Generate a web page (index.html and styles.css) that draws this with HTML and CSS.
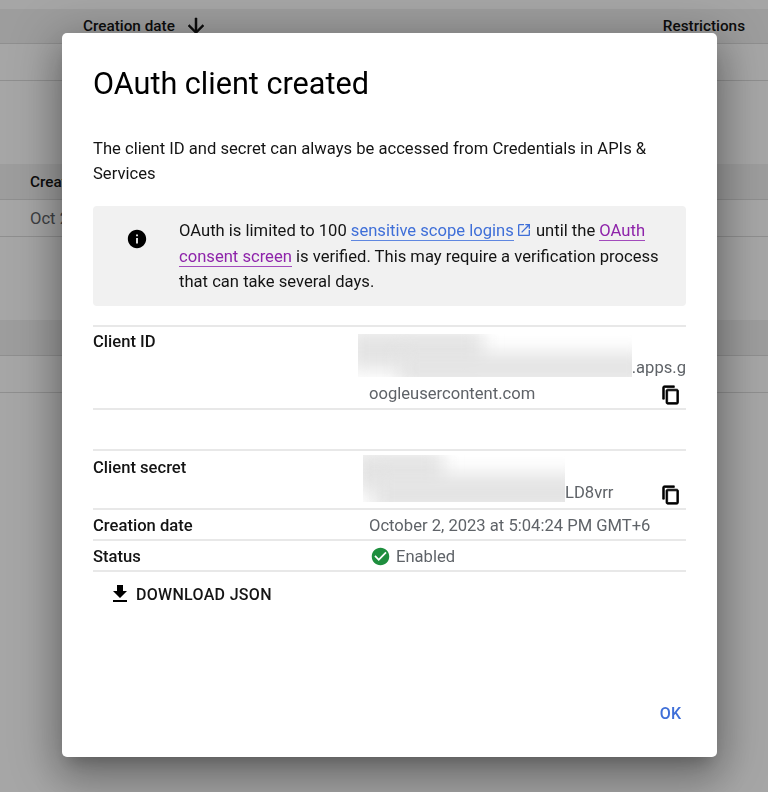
FILE: index.html
```html
<!DOCTYPE html>
<html lang="en">
<head>
    <meta charset="UTF-8">
    <meta name="viewport" content="width=device-width, initial-scale=1.0">
    <title>OAuth client created</title>
    <link rel="stylesheet" href="styles.css">
</head>
<body>
    <!-- Page behind the dialog -->
    <div class="page">
        <div class="table-head first">
            <span class="head-date">Creation date
                <svg class="sort-arrow" viewBox="0 0 24 24" width="24" height="24"><path d="M20 12l-1.41-1.41L13 16.17V4h-2v12.17l-5.58-5.59L4 12l8 8 8-8z"/></svg>
            </span>
            <span>Restrictions</span>
        </div>
        <div class="table-row"></div>
        <div class="table-head second"><span class="head-short">Creation date</span></div>
        <div class="table-row short"><span class="cell-short">Oct 2, 2023</span></div>
        <div class="table-head third"></div>
        <div class="table-row"></div>
    </div>
    <div class="backdrop"></div>

    <div class="dialog">
        <h1 class="dialog-title">OAuth client created</h1>
        <p class="dialog-intro">The client ID and secret can always be accessed from Credentials in APIs &amp; Services</p>

        <div class="notice">
            <svg class="notice-icon" viewBox="0 0 24 24" width="22" height="22"><path d="M12 2C6.48 2 2 6.48 2 12s4.48 10 10 10 10-4.48 10-10S17.52 2 12 2zm1 15h-2v-6h2v6zm0-8h-2V7h2v2z"/></svg>
            <p class="notice-text">OAuth is limited to 100 <a class="link" href="#">sensitive scope logins</a><svg class="ext-icon" viewBox="0 0 24 24" width="16" height="16"><path d="M19 19H5V5h7V3H5c-1.11 0-2 .9-2 2v14c0 1.1.89 2 2 2h14c1.1 0 2-.9 2-2v-7h-2v7zM14 3v2h3.59l-9.83 9.83 1.41 1.41L19 6.41V10h2V3h-7z"/></svg> until the <a class="link visited" href="#">OAuth consent screen</a> is verified. This may require a verification process that can take several days.</p>
        </div>

        <div class="row row-id">
            <div class="row-label">Client ID</div>
            <div class="row-value">
                <div class="secret-line">
                    <div class="redact redact-id"><i></i><i></i></div>
                    <span>.apps.g</span>
                </div>
                <div class="copy-line">
                    <span>oogleusercontent.com</span>
                    <svg class="copy-icon" viewBox="0 0 24 24" width="20" height="20"><path d="M16 1H4c-1.1 0-2 .9-2 2v14h2V3h12V1zm3 4H8c-1.1 0-2 .9-2 2v14c0 1.1.9 2 2 2h11c1.1 0 2-.9 2-2V7c0-1.1-.9-2-2-2zm0 16H8V7h11v14z"/></svg>
                </div>
            </div>
        </div>

        <div class="row row-secret">
            <div class="row-label">Client secret</div>
            <div class="row-value">
                <div class="copy-line">
                    <div class="secret-line">
                        <div class="redact redact-secret"><i></i><i></i></div>
                        <span>LD8vrr</span>
                    </div>
                    <svg class="copy-icon" viewBox="0 0 24 24" width="20" height="20"><path d="M16 1H4c-1.1 0-2 .9-2 2v14h2V3h12V1zm3 4H8c-1.1 0-2 .9-2 2v14c0 1.1.9 2 2 2h11c1.1 0 2-.9 2-2V7c0-1.1-.9-2-2-2zm0 16H8V7h11v14z"/></svg>
                </div>
            </div>
        </div>

        <div class="row row-small">
            <div class="row-label">Creation date</div>
            <div class="row-value">October 2, 2023 at 5:04:24 PM GMT+6</div>
        </div>
        <div class="row row-small row-last">
            <div class="row-label">Status</div>
            <div class="row-value status">
                <svg class="status-icon" viewBox="0 0 24 24" width="21" height="21"><path d="M12 2C6.48 2 2 6.48 2 12s4.48 10 10 10 10-4.48 10-10S17.52 2 12 2zm-2 15l-5-5 1.41-1.41L10 14.17l7.59-7.59L19 8l-9 9z"/></svg>
                Enabled
            </div>
        </div>

        <button class="download-btn" type="button">
            <svg viewBox="0 0 24 24" width="24" height="24"><path d="M19 9h-4V3H9v6H5l7 7 7-7zM5 18v2h14v-2H5z"/></svg>
            DOWNLOAD JSON
        </button>

        <div class="dialog-actions">
            <button class="ok-btn" type="button">OK</button>
        </div>
    </div>
</body>
</html>
```

FILE: styles.css
```css
html, body {
    margin: 0;
    height: 100%;
}
body {
    font-family: Roboto, "Liberation Sans", sans-serif;
    color: #141414;
    background: #fff;
    overflow: hidden;
}

/* page behind */
.page {
    padding-top: 9px;
}
.table-head {
    display: flex;
    align-items: center;
    height: 34px;
    background: #f2f2f2;
    border-bottom: 1px solid #dcdcdc;
    font-size: 15.3px;
    font-weight: 500;
}
.table-head.first {
    justify-content: space-between;
    padding: 0 23px 0 83px;
}
.table-head.second {
    margin-top: 83px;
    padding-left: 30px;
    height: 35px;
}
.table-head.third {
    margin-top: 83px;
    height: 35px;
}
.head-date {
    display: flex;
    align-items: center;
    gap: 9px;
}
.sort-arrow {
    fill: #141414;
    stroke: #141414;
    stroke-width: 0.5;
}
.table-row {
    display: flex;
    align-items: center;
    height: 36px;
    border-bottom: 1px solid #dcdcdc;
}
.cell-short {
    padding-left: 30px;
    color: #5f6368;
    font-size: 16.6px;
}
.backdrop {
    position: fixed;
    inset: 0;
    background: rgba(0, 0, 0, 0.35);
}

/* dialog */
.dialog {
    position: absolute;
    left: 62px;
    top: 33px;
    width: 655px;
    height: 724px;
    box-sizing: border-box;
    padding: 32px 31px 0 31px;
    display: flex;
    flex-direction: column;
    background: #fff;
    border-radius: 5px;
    box-shadow: 0 11px 15px -7px rgba(0, 0, 0, 0.2), 0 24px 38px 3px rgba(0, 0, 0, 0.14), 0 9px 46px 8px rgba(0, 0, 0, 0.26);
}
.dialog-title {
    margin: 0;
    font-size: 30.6px;
    font-weight: 400;
    line-height: 38px;
    color: #000;
}
.dialog-intro {
    margin: 33px 0 0;
    font-size: 16.6px;
    line-height: 25px;
}
.notice {
    display: flex;
    margin-top: 20px;
    height: 100px;
    box-sizing: border-box;
    padding: 12px 20px 0 33px;
    background: #f1f1f1;
    border-radius: 4px;
}
.notice-icon {
    flex: none;
    margin-top: 10px;
    margin-right: 31px;
    fill: #000;
}
.notice-text {
    margin: 0;
    font-size: 16.6px;
    line-height: 25.6px;
}
.link {
    color: #3f6fd8;
    text-decoration: none;
    border-bottom: 1px solid #5f87e0;
}
.link.visited {
    color: #8e24aa;
    border-bottom-color: #a24bbc;
}
.ext-icon {
    fill: #3f6fd8;
    margin-left: 2px;
    vertical-align: -2px;
}

.row {
    display: flex;
    border-top: 2px solid #e8e8e8;
    font-size: 16.6px;
}
.row-label {
    flex: none;
    width: 276px;
    font-weight: 500;
    line-height: 26px;
}
.row-value {
    flex: 1;
    min-width: 0;
    color: #5f6368;
    line-height: 26px;
}
.row-id {
    margin-top: 19px;
    height: 79px;
    padding-top: 2px;
    border-bottom: 2px solid #e8e8e8;
}
.row-secret {
    margin-top: 39px;
    height: 53px;
    padding-top: 4px;
}
.row-small {
    height: 26px;
    padding-top: 3px;
}
.row-last {
    border-bottom: 2px solid #e8e8e8;
}
.secret-line {
    display: flex;
    align-items: flex-end;
    margin-left: -11px;
}
.secret-line span {
    margin-bottom: -4px;
}
.redact {
    position: relative;
    overflow: hidden;
    background: #fff;
}
.redact i {
    position: absolute;
    background: #e4e4e4;
    filter: blur(9px);
}
.redact-id {
    width: 274px;
    height: 43px;
    margin-top: 5px;
}
.redact-id i:first-child {
    left: -10px;
    top: -4px;
    width: 135px;
    height: 40px;
}
.redact-id i:last-child {
    left: 40px;
    top: 18px;
    width: 250px;
    height: 32px;
}
.redact-secret {
    width: 202px;
    height: 47px;
    margin-left: 5px;
}
.redact-secret i:first-child {
    left: -10px;
    top: -4px;
    width: 90px;
    height: 40px;
}
.redact-secret i:last-child {
    left: 10px;
    top: 18px;
    width: 210px;
    height: 40px;
}
.copy-line {
    display: flex;
    justify-content: space-between;
    align-items: center;
    margin-top: 4px;
}
.copy-icon {
    flex: none;
    fill: #000;
    stroke: #000;
    stroke-width: 0.9;
    margin-right: 5px;
    margin-top: 2px;
}
.row-secret .copy-line {
    align-items: flex-end;
    margin-top: 0;
}
.row-secret .copy-icon {
    margin-top: 0;
    margin-bottom: -3px;
}
.status {
    display: flex;
    align-items: center;
    gap: 5px;
    margin-top: -1px;
}
.status-icon {
    fill: #1e8e3e;
    margin-left: 1px;
}
.download-btn {
    display: flex;
    align-items: center;
    gap: 4px;
    align-self: flex-start;
    margin: 9px 0 0 15px;
    padding: 0;
    height: 26px;
    border: 0;
    background: none;
    font: 500 16px Roboto, "Liberation Sans", sans-serif;
    letter-spacing: 0.3px;
    color: #141414;
}
.dialog-actions {
    display: flex;
    justify-content: flex-end;
    margin-top: auto;
    padding-bottom: 33px;
}
.ok-btn {
    padding: 0;
    margin-right: 5px;
    height: 22px;
    border: 0;
    background: none;
    font: 500 16px Roboto, "Liberation Sans", sans-serif;
    color: #3f6fd8;
}
```
